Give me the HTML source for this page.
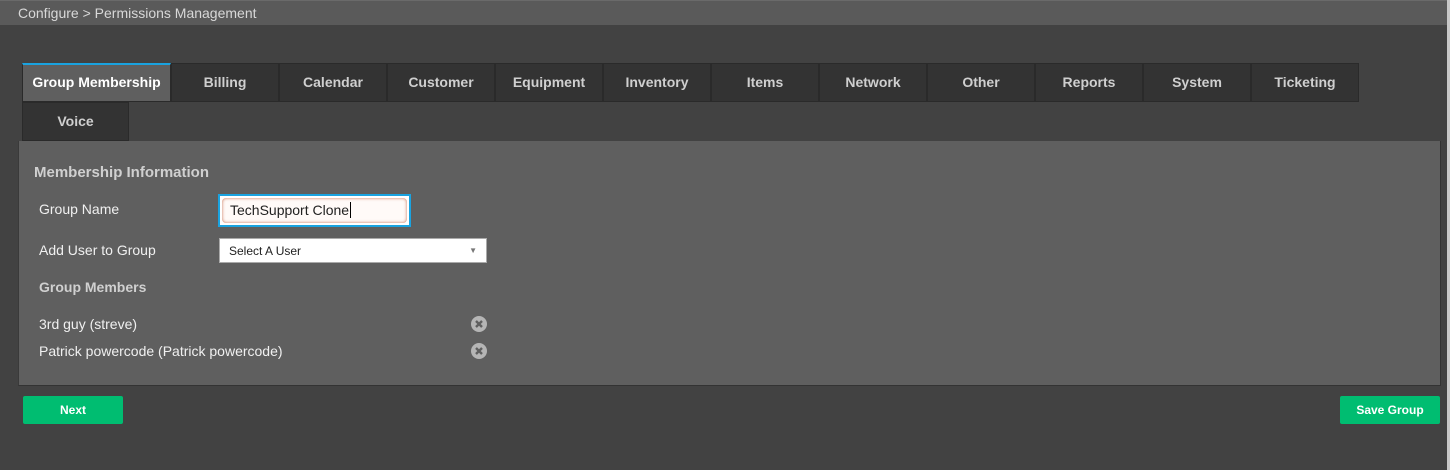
<!DOCTYPE html>
<html><head><meta charset="utf-8"><style>
*{box-sizing:border-box;margin:0;padding:0}
body{width:1450px;height:470px;background:#424242;font-family:"Liberation Sans",sans-serif;position:relative;overflow:hidden}
.hdr{position:absolute;left:0;top:0;width:1447px;height:25px;background:#5a5a5a;border-top:1px solid #6a6a6a;color:#d8d8d8;font-size:14px;line-height:24px;padding-left:18px}
.edge{position:absolute;right:0;top:0;width:3px;height:470px;background:#c8c8c8}
.tab{position:absolute;height:39px;background:#333;border:1px solid #2a2a2a;color:#cfcfcf;font-weight:bold;font-size:14px;text-align:center;line-height:37px}
.tab.act{background:#5f5f5f;color:#fff;border-top:2px solid #1aa3e0;line-height:35px}
.panel{position:absolute;left:18px;top:141px;width:1423px;height:245px;background:#5f5f5f;border-right:1px solid #333;border-bottom:1px solid #333;border-left:1px solid #3a3a3a}
.t{position:absolute;color:#f0f0f0;font-size:14px}
.b{font-weight:bold;color:#d0d0d0}
.btn{position:absolute;height:28px;background:#00bd71;border-radius:2px;color:#fff;font-weight:bold;font-size:12px;text-align:center;line-height:28px}
</style></head><body>
<div class="hdr">Configure &gt; Permissions Management</div>
<div class="edge"></div>
<div class="tab act" style="left:22px;top:63px;width:149px">Group Membership</div>
<div class="tab" style="left:171px;top:63px;width:108px">Billing</div>
<div class="tab" style="left:279px;top:63px;width:108px">Calendar</div>
<div class="tab" style="left:387px;top:63px;width:108px">Customer</div>
<div class="tab" style="left:495px;top:63px;width:108px">Equipment</div>
<div class="tab" style="left:603px;top:63px;width:108px">Inventory</div>
<div class="tab" style="left:711px;top:63px;width:108px">Items</div>
<div class="tab" style="left:819px;top:63px;width:108px">Network</div>
<div class="tab" style="left:927px;top:63px;width:108px">Other</div>
<div class="tab" style="left:1035px;top:63px;width:108px">Reports</div>
<div class="tab" style="left:1143px;top:63px;width:108px">System</div>
<div class="tab" style="left:1251px;top:63px;width:108px">Ticketing</div>
<div class="tab" style="left:22px;top:102px;width:107px">Voice</div>
<div class="panel"></div>
<div class="t b" style="left:34px;top:164px;font-size:15px">Membership Information</div>
<div class="t" style="left:39px;top:201px">Group Name</div>
<div style="position:absolute;left:218px;top:194px;width:193px;height:33px;border:2px solid #1aa3e0;background:#fff;padding:2px"><div style="width:100%;height:100%;border-radius:4px;box-shadow:inset 0 0 3px #c87050;background:#fffaf8;font-size:14px;line-height:25px;padding-left:8px;color:#222">TechSupport Clone<span style="border-left:1px solid #000;margin-left:1px"></span></div></div>
<div class="t" style="left:39px;top:242px">Add User to Group</div>
<div style="position:absolute;left:219px;top:238px;width:268px;height:25px;background:#fff;border:1px solid #aaa;font-size:12px;color:#222;line-height:24px;padding-left:9px">Select A User<span style="position:absolute;right:9px;top:0;color:#777;font-size:8px">▼</span></div>
<div class="t b" style="left:39px;top:279px">Group Members</div>
<div class="t" style="left:39px;top:316px">3rd guy (streve)</div>
<div class="t" style="left:39px;top:343px">Patrick powercode (Patrick powercode)</div>
<svg style="position:absolute;left:471px;top:316px" width="16" height="16" viewBox="0 0 16 16"><circle cx="8" cy="8" r="8" fill="#b5b5b5"/><path d="M5 5L11 11M11 5L5 11" stroke="#5f5f5f" stroke-width="2.4"/></svg>
<svg style="position:absolute;left:471px;top:343px" width="16" height="16" viewBox="0 0 16 16"><circle cx="8" cy="8" r="8" fill="#b5b5b5"/><path d="M5 5L11 11M11 5L5 11" stroke="#5f5f5f" stroke-width="2.4"/></svg>
<div class="btn" style="left:23px;top:396px;width:100px">Next</div>
<div class="btn" style="left:1340px;top:396px;width:100px">Save Group</div>
</body></html>
